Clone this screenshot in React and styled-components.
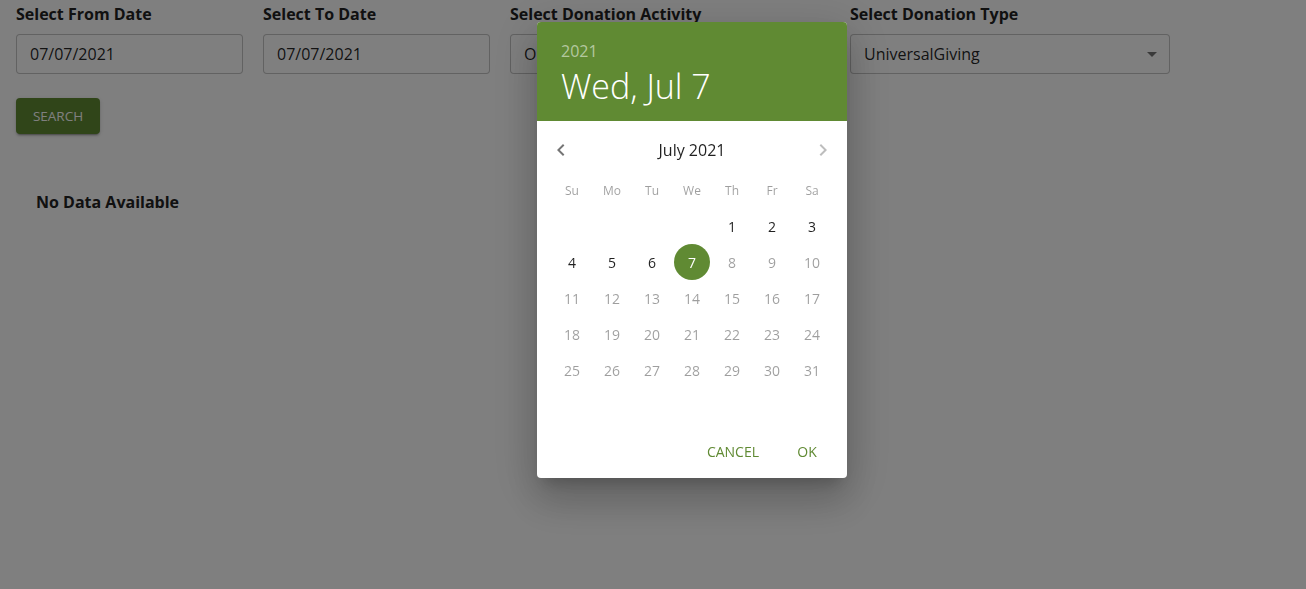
import styled, { createGlobalStyle } from "styled-components";

const GREEN = "#608a33";

const GlobalStyle = createGlobalStyle`
  html, body {
    margin: 0;
    padding: 0;
    background: #fff;
    font-family: "Open Sans", "Liberation Sans", sans-serif;
    color: rgba(0, 0, 0, 0.87);
  }
  * { box-sizing: border-box; }
`;

const Page = styled.div`
  height: 589px;
  padding: 3px 16px 0;
`;

const FilterRow = styled.div`
  display: flex;
  gap: 20px;
`;

const Field = styled.div`
  display: flex;
  flex-direction: column;
  width: ${({ $w }) => $w}px;
`;

const Label = styled.label`
  font-size: 16px;
  font-weight: 700;
  line-height: 22px;
  color: #222;
  margin-bottom: 9px;
  white-space: nowrap;
`;

const Input = styled.div`
  height: 40px;
  border: 1px solid rgba(0, 0, 0, 0.23);
  border-radius: 4px;
  padding: 0 14px 0 13px;
  display: flex;
  align-items: center;
  justify-content: space-between;
  font-size: 16px;
  color: rgba(0, 0, 0, 0.87);
  background: #fff;
`;

const Caret = styled.span`
  width: 0;
  height: 0;
  border-left: 5px solid transparent;
  border-right: 5px solid transparent;
  border-top: 5px solid rgba(0, 0, 0, 0.54);
  margin-right: -2px;
`;

const SearchButton = styled.button`
  margin-top: 24px;
  height: 36px;
  width: 84px;
  border: none;
  border-radius: 4px;
  background: ${GREEN};
  color: #fff;
  font-family: inherit;
  font-size: 13.5px;
  text-transform: uppercase;
  box-shadow: 0 3px 1px -2px rgba(0,0,0,.2), 0 2px 2px 0 rgba(0,0,0,.14), 0 1px 5px 0 rgba(0,0,0,.12);
`;

const Empty = styled.div`
  margin: 57px 0 0 20px;
  font-size: 16px;
  font-weight: 700;
  color: #222;
`;

const Backdrop = styled.div`
  position: fixed;
  inset: 0;
  background: rgba(0, 0, 0, 0.5);
`;

const Dialog = styled.div`
  position: fixed;
  left: 537px;
  top: 22px;
  width: 310px;
  background: #fff;
  border-radius: 4px;
  overflow: hidden;
  box-shadow: 0 11px 15px -7px rgba(0,0,0,.2), 0 24px 38px 3px rgba(0,0,0,.14), 0 9px 46px 8px rgba(0,0,0,.12);
`;

const Toolbar = styled.div`
  height: 99px;
  background: ${GREEN};
  padding: 18px 24px 0;
  display: flex;
  flex-direction: column;
  color: #fff;
`;

const Year = styled.div`
  font-size: 16px;
  line-height: 22px;
  color: rgba(255, 255, 255, 0.54);
`;

const BigDate = styled.div`
  font-size: 34px;
  font-weight: 300;
  line-height: 40px;
  margin-top: 4px;
`;

const MonthHeader = styled.div`
  margin: 5px 0 9px;
  height: 48px;
  display: flex;
  align-items: center;
  justify-content: space-between;
  font-size: 16px;
`;

const ArrowButton = styled.button`
  width: 48px;
  height: 48px;
  border: none;
  background: none;
  padding: 12px;
  display: flex;
  align-items: center;
  justify-content: center;
  color: ${({ $disabled }) => ($disabled ? "rgba(0,0,0,0.26)" : "rgba(0,0,0,0.54)")};
`;

const Grid = styled.div`
  display: grid;
  grid-template-columns: repeat(7, 40px);
  justify-content: center;
`;

const WeekDay = styled.span`
  height: 16px;
  line-height: 16px;
  text-align: center;
  font-size: 12px;
  color: rgba(0, 0, 0, 0.38);
`;

const Days = styled(Grid)`
  margin-top: 9px;
  min-height: 216px;
  align-content: start;
  grid-auto-rows: 36px;
`;

const Day = styled.span`
  width: 36px;
  height: 36px;
  margin: 0 2px;
  border-radius: 50%;
  display: flex;
  align-items: center;
  justify-content: center;
  font-size: 14px;
  background: ${({ $selected }) => ($selected ? GREEN : "transparent")};
  color: ${({ $selected, $disabled }) =>
    $selected ? "#fff" : $disabled ? "rgba(0,0,0,0.38)" : "rgba(0,0,0,0.87)"};
`;

const Actions = styled.div`
  display: flex;
  justify-content: flex-end;
  gap: 8px;
  padding: 9px 8px 9px;
`;

const TextButton = styled.button`
  height: 36px;
  padding: 6px 8px;
  min-width: 64px;
  border: none;
  background: none;
  font-family: inherit;
  font-size: 14px;
  color: ${GREEN};
  text-transform: uppercase;
`;

const Chevron = ({ dir }) => (
  <svg width="24" height="24" viewBox="0 0 24 24" fill="currentColor">
    {dir === "left" ? (
      <path d="M15.41 16.59L10.83 12l4.58-4.59L14 6l-6 6 6 6 1.41-1.41z" />
    ) : (
      <path d="M8.59 16.59L13.17 12 8.59 7.41 10 6l6 6-6 6-1.41-1.41z" />
    )}
  </svg>
);

const weekDays = ["Su", "Mo", "Tu", "We", "Th", "Fr", "Sa"];
const firstOffset = 4;
const days = Array.from({ length: 31 }, (_, i) => i + 1);

const App = () => {
  return (
    <>
      <GlobalStyle />
      <Page>
        <FilterRow>
          <Field $w={227}>
            <Label>Select From Date</Label>
            <Input>07/07/2021</Input>
          </Field>
          <Field $w={227}>
            <Label>Select To Date</Label>
            <Input>07/07/2021</Input>
          </Field>
          <Field $w={320}>
            <Label>Select Donation Activity</Label>
            <Input>
              One Time
              <Caret />
            </Input>
          </Field>
          <Field $w={320}>
            <Label>Select Donation Type</Label>
            <Input>
              UniversalGiving
              <Caret />
            </Input>
          </Field>
        </FilterRow>
        <SearchButton>Search</SearchButton>
        <Empty>No Data Available</Empty>
      </Page>

      <Backdrop />
      <Dialog>
        <Toolbar>
          <Year>2021</Year>
          <BigDate>Wed, Jul 7</BigDate>
        </Toolbar>
        <MonthHeader>
          <ArrowButton>
            <Chevron dir="left" />
          </ArrowButton>
          <span>July 2021</span>
          <ArrowButton $disabled>
            <Chevron dir="right" />
          </ArrowButton>
        </MonthHeader>
        <Grid>
          {weekDays.map((d) => (
            <WeekDay key={d}>{d}</WeekDay>
          ))}
        </Grid>
        <Days>
          {Array.from({ length: firstOffset }, (_, i) => (
            <span key={"e" + i} />
          ))}
          {days.map((d) => (
            <Day key={d} $selected={d === 7} $disabled={d > 7}>
              {d}
            </Day>
          ))}
        </Days>
        <Actions>
          <TextButton>Cancel</TextButton>
          <TextButton>OK</TextButton>
        </Actions>
      </Dialog>
    </>
  );
};

export default App;
